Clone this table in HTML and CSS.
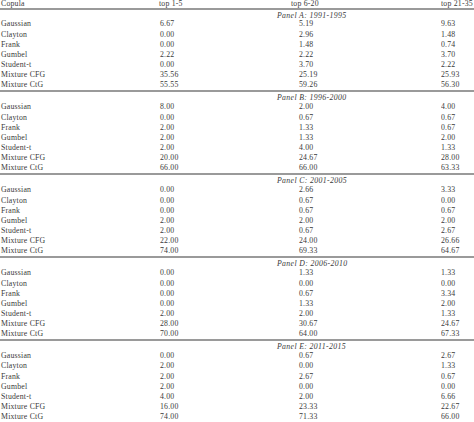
FILE: index.html
```html
<!DOCTYPE html>
<html>
<head>
<meta charset="utf-8">
<link rel="stylesheet" href="styles.css">
</head>
<body>
<div class="table">
  <div class="row head"><span class="c1">Copula</span><span class="c2">top 1-5</span><span class="c3">top 6-20</span><span class="c4">top 21-35</span></div>

  <section class="panel">
    <div class="label">Panel A: 1991-1995</div>
    <div class="row"><span class="c1">Gaussian</span><span class="c2">6.67</span><span class="c3">5.19</span><span class="c4">9.63</span></div>
    <div class="row"><span class="c1">Clayton</span><span class="c2">0.00</span><span class="c3">2.96</span><span class="c4">1.48</span></div>
    <div class="row"><span class="c1">Frank</span><span class="c2">0.00</span><span class="c3">1.48</span><span class="c4">0.74</span></div>
    <div class="row"><span class="c1">Gumbel</span><span class="c2">2.22</span><span class="c3">2.22</span><span class="c4">3.70</span></div>
    <div class="row"><span class="c1">Student-t</span><span class="c2">0.00</span><span class="c3">3.70</span><span class="c4">2.22</span></div>
    <div class="row"><span class="c1">Mixture CFG</span><span class="c2">35.56</span><span class="c3">25.19</span><span class="c4">25.93</span></div>
    <div class="row"><span class="c1">Mixture CtG</span><span class="c2">55.55</span><span class="c3">59.26</span><span class="c4">56.30</span></div>
  </section>

  <section class="panel">
    <div class="label">Panel B: 1996-2000</div>
    <div class="row"><span class="c1">Gaussian</span><span class="c2">8.00</span><span class="c3">2.00</span><span class="c4">4.00</span></div>
    <div class="row"><span class="c1">Clayton</span><span class="c2">0.00</span><span class="c3">0.67</span><span class="c4">0.67</span></div>
    <div class="row"><span class="c1">Frank</span><span class="c2">2.00</span><span class="c3">1.33</span><span class="c4">0.67</span></div>
    <div class="row"><span class="c1">Gumbel</span><span class="c2">2.00</span><span class="c3">1.33</span><span class="c4">2.00</span></div>
    <div class="row"><span class="c1">Student-t</span><span class="c2">2.00</span><span class="c3">4.00</span><span class="c4">1.33</span></div>
    <div class="row"><span class="c1">Mixture CFG</span><span class="c2">20.00</span><span class="c3">24.67</span><span class="c4">28.00</span></div>
    <div class="row"><span class="c1">Mixture CtG</span><span class="c2">66.00</span><span class="c3">66.00</span><span class="c4">63.33</span></div>
  </section>

  <section class="panel">
    <div class="label">Panel C: 2001-2005</div>
    <div class="row"><span class="c1">Gaussian</span><span class="c2">0.00</span><span class="c3">2.66</span><span class="c4">3.33</span></div>
    <div class="row"><span class="c1">Clayton</span><span class="c2">0.00</span><span class="c3">0.67</span><span class="c4">0.00</span></div>
    <div class="row"><span class="c1">Frank</span><span class="c2">0.00</span><span class="c3">0.67</span><span class="c4">0.67</span></div>
    <div class="row"><span class="c1">Gumbel</span><span class="c2">2.00</span><span class="c3">2.00</span><span class="c4">2.00</span></div>
    <div class="row"><span class="c1">Student-t</span><span class="c2">2.00</span><span class="c3">0.67</span><span class="c4">2.67</span></div>
    <div class="row"><span class="c1">Mixture CFG</span><span class="c2">22.00</span><span class="c3">24.00</span><span class="c4">26.66</span></div>
    <div class="row"><span class="c1">Mixture CtG</span><span class="c2">74.00</span><span class="c3">69.33</span><span class="c4">64.67</span></div>
  </section>

  <section class="panel">
    <div class="label">Panel D: 2006-2010</div>
    <div class="row"><span class="c1">Gaussian</span><span class="c2">0.00</span><span class="c3">1.33</span><span class="c4">1.33</span></div>
    <div class="row"><span class="c1">Clayton</span><span class="c2">0.00</span><span class="c3">0.00</span><span class="c4">0.00</span></div>
    <div class="row"><span class="c1">Frank</span><span class="c2">0.00</span><span class="c3">0.67</span><span class="c4">3.34</span></div>
    <div class="row"><span class="c1">Gumbel</span><span class="c2">0.00</span><span class="c3">1.33</span><span class="c4">2.00</span></div>
    <div class="row"><span class="c1">Student-t</span><span class="c2">2.00</span><span class="c3">2.00</span><span class="c4">1.33</span></div>
    <div class="row"><span class="c1">Mixture CFG</span><span class="c2">28.00</span><span class="c3">30.67</span><span class="c4">24.67</span></div>
    <div class="row"><span class="c1">Mixture CtG</span><span class="c2">70.00</span><span class="c3">64.00</span><span class="c4">67.33</span></div>
  </section>

  <section class="panel">
    <div class="label">Panel E: 2011-2015</div>
    <div class="row"><span class="c1">Gaussian</span><span class="c2">0.00</span><span class="c3">0.67</span><span class="c4">2.67</span></div>
    <div class="row"><span class="c1">Clayton</span><span class="c2">2.00</span><span class="c3">0.00</span><span class="c4">1.33</span></div>
    <div class="row"><span class="c1">Frank</span><span class="c2">2.00</span><span class="c3">2.67</span><span class="c4">0.67</span></div>
    <div class="row"><span class="c1">Gumbel</span><span class="c2">2.00</span><span class="c3">0.00</span><span class="c4">0.00</span></div>
    <div class="row"><span class="c1">Student-t</span><span class="c2">4.00</span><span class="c3">2.00</span><span class="c4">6.66</span></div>
    <div class="row"><span class="c1">Mixture CFG</span><span class="c2">16.00</span><span class="c3">23.33</span><span class="c4">22.67</span></div>
    <div class="row"><span class="c1">Mixture CtG</span><span class="c2">74.00</span><span class="c3">71.33</span><span class="c4">66.00</span></div>
  </section>
</div>
</body>
</html>
```

FILE: styles.css
```css
html, body {
  margin: 0;
  padding: 0;
  background: #ffffff;
  overflow: hidden;
}

body {
  width: 474px;
  height: 422px;
}

.table {
  font-family: "Liberation Serif", "Times New Roman", serif;
  font-size: 7.8px;
  letter-spacing: 0.2px;
  color: #3a3a3a;
  width: 474px;
  overflow: hidden;
}

.row {
  display: grid;
  grid-template-columns: 159px 132px 150px 33px;
  height: 10.17px;
  line-height: 10.17px;
  white-space: nowrap;
}

.row .c1 { padding-left: 1px; }
.row .c2 { padding-left: 1px; }
.row .c3 { padding-left: 8px; }
.row .c4 { padding-left: 0; overflow: hidden; }

.row.head {
  height: 7.5px;
  line-height: 7.5px;
}

.row.head .c2,
.row.head .c3 {
  padding-left: 0;
}

.panel {
  border-top: 2px solid #9a9a9a;
}

.label {
  height: 9.9px;
  box-sizing: border-box;
  padding-top: 2px;
  line-height: 7.9px;
  padding-left: 277px;
  font-style: italic;
  letter-spacing: 0.35px;
  white-space: nowrap;
}
```
